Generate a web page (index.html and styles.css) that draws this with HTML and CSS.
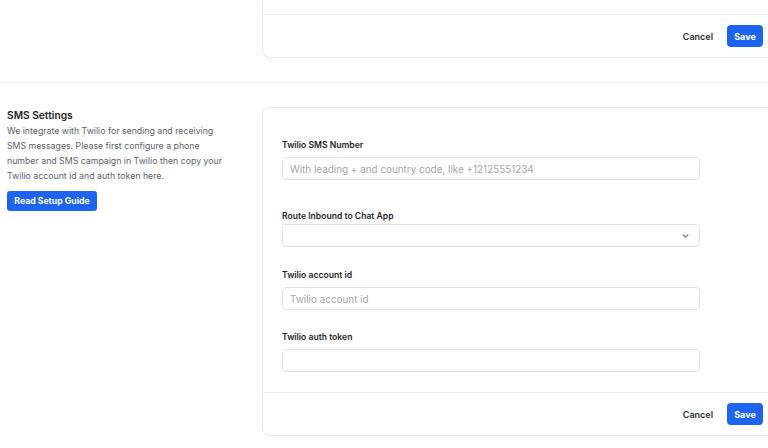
FILE: index.html
```html
<!DOCTYPE html>
<html lang="en">
<head>
<meta charset="utf-8">
<title>SMS Settings</title>
<link rel="stylesheet" href="styles.css">
</head>
<body>
<div class="page">
  <section class="section section-top">
    <div class="aside"></div>
    <div class="card card-cut">
      <div class="card-body card-body-stub"></div>
      <div class="card-footer">
        <button class="btn-cancel" type="button">Cancel</button>
        <button class="btn-save" type="button">Save</button>
      </div>
    </div>
  </section>

  <section class="section section-sms">
    <div class="aside">
      <h2 class="aside-title">SMS Settings</h2>
      <p class="aside-text">We integrate with Twilio for sending and receiving SMS messages. Please first configure a phone number and SMS campaign in Twilio then copy your Twilio account id and auth token here.</p>
      <button class="btn-guide" type="button">Read Setup Guide</button>
    </div>
    <div class="card">
      <div class="card-body">
        <div class="field field-first">
          <label class="field-label">Twilio SMS Number</label>
          <input class="field-input" type="text" placeholder="With leading + and country code, like +12125551234">
        </div>
        <div class="field field-route">
          <label class="field-label">Route Inbound to Chat App</label>
          <div class="field-select">
            <svg class="chevron" width="7" height="4" viewBox="0 0 7 4"><polyline points="1,0.8 3.5,3.2 6,0.8" fill="none" stroke="#7d838a" stroke-width="1.2" stroke-linecap="round" stroke-linejoin="round"/></svg>
          </div>
        </div>
        <div class="field field-account">
          <label class="field-label">Twilio account id</label>
          <input class="field-input" type="text" placeholder="Twilio account id">
        </div>
        <div class="field field-token">
          <label class="field-label">Twilio auth token</label>
          <input class="field-input" type="text">
        </div>
      </div>
      <div class="card-footer">
        <button class="btn-cancel" type="button">Cancel</button>
        <button class="btn-save" type="button">Save</button>
      </div>
    </div>
  </section>
</div>
</body>
</html>
```

FILE: styles.css
```css
html, body {
  margin: 0;
  padding: 0;
  background: #ffffff;
  overflow: hidden;
}

body {
  font-family: Inter, "Noto Sans", "Liberation Sans", sans-serif;
  color: #1f2328;
  width: 768px;
  height: 448px;
}

.page {
  width: 790px;
}

.section {
  display: grid;
  grid-template-columns: 255px 518px;
  padding-left: 7px;
  align-items: start;
}

.section-top {
  padding-bottom: 24px;
  border-bottom: 1px solid #ededed;
}

.section-sms {
  padding-top: 24px;
}

.card {
  border: 1px solid #e9e9e9;
  border-radius: 8px;
  background: #ffffff;
}

.card-cut {
  border-top: none;
  border-top-left-radius: 0;
  border-top-right-radius: 0;
}

.card-body {
  padding: 31px 19px 20px 19px;
}

.card-body-stub {
  padding: 0;
  height: 14px;
}

.card-footer {
  border-top: 1px solid #ededed;
  display: flex;
  justify-content: flex-end;
  align-items: center;
  gap: 6px;
  padding: 10px 16px 10px 16px;
}

.btn-cancel {
  background: none;
  border: none;
  font-family: inherit;
  font-size: 9px;
  font-weight: 600;
  color: #2b2f33;
  padding: 0 8px;
  height: 22px;
}

.btn-save {
  background: #1d64f2;
  border: none;
  border-radius: 4px;
  color: #ffffff;
  font-family: inherit;
  font-size: 9px;
  font-weight: 700;
  width: 36px;
  height: 22px;
  padding: 0;
}

.aside-title {
  margin: 0 0 1px 0;
  font-size: 10.2px;
  line-height: 16px;
  font-weight: 600;
  color: #1f2328;
}

.aside-text {
  margin: 0;
  font-size: 8.75px;
  line-height: 15px;
  color: #5b6168;
  width: 225px;
}

.btn-guide {
  margin-top: 7px;
  background: #1d64f2;
  border: none;
  border-radius: 3px;
  color: #ffffff;
  font-family: inherit;
  font-size: 8.7px;
  font-weight: 700;
  height: 20px;
  width: 90px;
  padding: 0;
}

.field {
  display: flex;
  flex-direction: column;
  width: 418px;
}

.field-route { margin-top: 30px; }
.field-account { margin-top: 22px; }
.field-token { margin-top: 21px; }

.field-label {
  font-size: 8.6px;
  line-height: 12px;
  font-weight: 600;
  color: #1f2328;
  margin-bottom: 6px;
}

.field-route .field-label {
  margin-bottom: 2px;
}

.field-input,
.field-select {
  box-sizing: border-box;
  height: 23px;
  width: 418px;
  border: 1px solid #e2e2e2;
  border-radius: 4px;
  background: #ffffff;
  font-family: inherit;
  font-size: 9.9px;
  padding: 0 7px;
  color: #1f2328;
  outline: none;
}

.field-input::placeholder {
  color: #a3a6aa;
}

.field-select {
  display: flex;
  justify-content: flex-end;
  align-items: center;
  padding-right: 10px;
}
```
